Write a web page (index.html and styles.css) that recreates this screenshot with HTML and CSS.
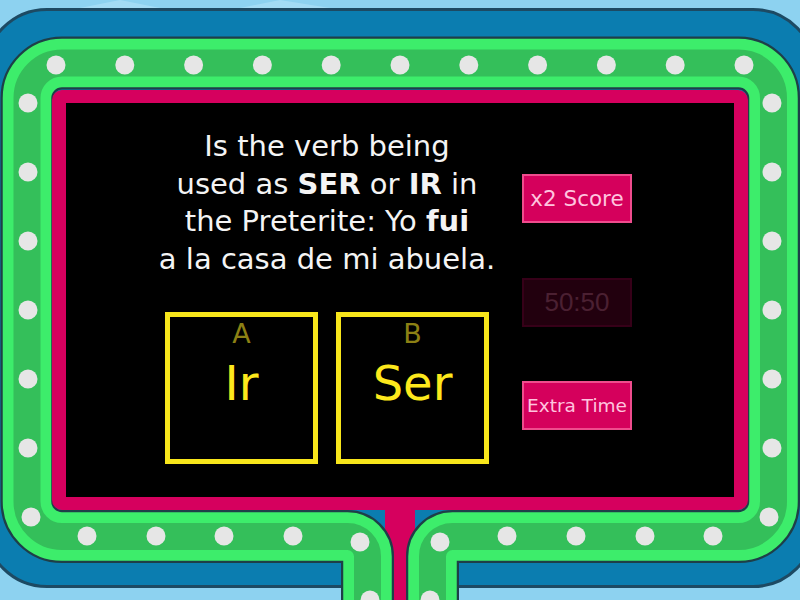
FILE: index.html
```html
<!DOCTYPE html>
<html>
<head>
<meta charset="utf-8">
<link rel="stylesheet" href="styles.css">
</head>
<body>
<svg class="frame" width="800" height="600" viewBox="0 0 800 600" xmlns="http://www.w3.org/2000/svg">
  <rect x="0" y="0" width="800" height="600" fill="#8dd2f0"/>
  <polygon points="120,0 160,8 80,8" fill="#a3dcf5"/>
  <polygon points="280,0 330,8 240,8" fill="#a3dcf5"/>
  <rect x="-15" y="9.5" width="830" height="577" rx="62" fill="#0b7db0" stroke="#1d4a63" stroke-width="3"/>
  <rect x="385" y="470" width="30" height="140" fill="#d6005e"/>
  <g fill="none" stroke-linejoin="round">
    <path d="M367.5 620 L367.5 556.5 A20 20 0 0 0 347.5 536.5 L62 536.5 A35 35 0 0 1 27 501.5 L27 98 A35 35 0 0 1 62 63 L738.5 63 A35 35 0 0 1 773.5 98 L773.5 501.5 A35 35 0 0 1 738.5 536.5 L452.5 536.5 A20 20 0 0 0 432.5 556.5 L432.5 620" stroke="#1e3f48" stroke-width="53"/>
    <path d="M367.5 620 L367.5 556.5 A20 20 0 0 0 347.5 536.5 L62 536.5 A35 35 0 0 1 27 501.5 L27 98 A35 35 0 0 1 62 63 L738.5 63 A35 35 0 0 1 773.5 98 L773.5 501.5 A35 35 0 0 1 738.5 536.5 L452.5 536.5 A20 20 0 0 0 432.5 556.5 L432.5 620" stroke="#3ded6b" stroke-width="48.5"/>
    <path d="M367.5 620 L367.5 556.5 A20 20 0 0 0 347.5 536.5 L62 536.5 A35 35 0 0 1 27 501.5 L27 98 A35 35 0 0 1 62 63 L738.5 63 A35 35 0 0 1 773.5 98 L773.5 501.5 A35 35 0 0 1 738.5 536.5 L452.5 536.5 A20 20 0 0 0 432.5 556.5 L432.5 620" stroke="#34bf5a" stroke-width="27"/>
  </g>
  <g fill="#e6e6e6">
    <circle cx="56" cy="65" r="9.5"/><circle cx="124.8" cy="65" r="9.5"/><circle cx="193.6" cy="65" r="9.5"/><circle cx="262.4" cy="65" r="9.5"/><circle cx="331.2" cy="65" r="9.5"/><circle cx="400" cy="65" r="9.5"/><circle cx="468.8" cy="65" r="9.5"/><circle cx="537.6" cy="65" r="9.5"/><circle cx="606.4" cy="65" r="9.5"/><circle cx="675.2" cy="65" r="9.5"/><circle cx="744" cy="65" r="9.5"/>
    <circle cx="28" cy="103" r="9.5"/><circle cx="28" cy="172" r="9.5"/><circle cx="28" cy="241" r="9.5"/><circle cx="28" cy="310" r="9.5"/><circle cx="28" cy="379" r="9.5"/><circle cx="28" cy="448" r="9.5"/><circle cx="31" cy="517" r="9.5"/>
    <circle cx="772" cy="103" r="9.5"/><circle cx="772" cy="172" r="9.5"/><circle cx="772" cy="241" r="9.5"/><circle cx="772" cy="310" r="9.5"/><circle cx="772" cy="379" r="9.5"/><circle cx="772" cy="448" r="9.5"/><circle cx="769" cy="517" r="9.5"/>
    <circle cx="87" cy="536" r="9.5"/><circle cx="156" cy="536" r="9.5"/><circle cx="224" cy="536" r="9.5"/><circle cx="293" cy="536" r="9.5"/><circle cx="360" cy="542" r="9.5"/><circle cx="370" cy="600" r="9.5"/>
    <circle cx="507" cy="536" r="9.5"/><circle cx="576" cy="536" r="9.5"/><circle cx="645" cy="536" r="9.5"/><circle cx="713" cy="536" r="9.5"/><circle cx="440" cy="542" r="9.5"/><circle cx="430" cy="600" r="9.5"/>
  </g>
</svg>
<main class="panel">
  <section class="left">
    <p class="question">Is the verb being<br>used as <b>SER</b> or <b>IR</b> in<br>the Preterite: Yo <b>fui</b><br>a la casa de mi abuela.</p>
    <div class="answers">
      <div class="answer"><span class="letter">A</span><span class="word">Ir</span></div>
      <div class="answer"><span class="letter">B</span><span class="word">Ser</span></div>
    </div>
  </section>
  <aside class="powerups">
    <div class="btn btn-score">x2 Score</div>
    <div class="btn btn-off">50:50</div>
    <div class="btn btn-time">Extra Time</div>
  </aside>
</main>
</body>
</html>
```
FILE: styles.css
```css
html {
  background: #8dd2f0;
}
body {
  margin: 0;
  width: 800px;
  height: 600px;
  overflow: hidden;
  padding: 90px 0 0 52px;
  box-sizing: border-box;
  font-family: "DejaVu Sans", "Liberation Sans", sans-serif;
}
.frame {
  position: absolute;
  left: 0;
  top: 0;
  z-index: -1;
}
.panel {
  width: 696px;
  height: 420px;
  box-sizing: border-box;
  border: solid #d6005e;
  border-width: 13px 14px 13px 14px;
  border-radius: 10px;
  background: #000;
  display: flex;
}
.left {
  width: 360px;
  margin-left: 81px;
  padding-top: 25px;
  display: flex;
  flex-direction: column;
  align-items: center;
}
.question {
  margin: 0;
  color: #f4f4f4;
  font-size: 29px;
  line-height: 37.7px;
  text-align: center;
  white-space: nowrap;
}
.question b {
  font-weight: bold;
}
.answers {
  margin-top: 33.5px;
  display: flex;
  gap: 18px;
}
.answer {
  width: 153px;
  height: 152px;
  box-sizing: border-box;
  border: 5px solid #f8e61b;
  display: flex;
  flex-direction: column;
  align-items: center;
  padding-top: 2.5px;
}
.letter {
  color: #8c8014;
  font-size: 27px;
  line-height: 27px;
}
.word {
  margin-top: 12.5px;
  color: #fde81c;
  font-size: 48px;
  line-height: 48px;
}
.powerups {
  margin-left: 15px;
  padding-top: 71px;
  display: flex;
  flex-direction: column;
  gap: 54.5px;
}
.btn {
  width: 110px;
  height: 49px;
  box-sizing: border-box;
  border: 2px solid #ef4c8d;
  background: #d5005c;
  color: #ffc4df;
  display: flex;
  align-items: center;
  justify-content: center;
  white-space: nowrap;
}
.btn-score {
  font-size: 21.5px;
}
.btn-time {
  font-size: 18.5px;
}
.btn-off {
  background: #22000e;
  border-color: #360018;
  color: #4b2032;
  font-family: "Liberation Sans", Arial, sans-serif;
  font-size: 26px;
}
```
